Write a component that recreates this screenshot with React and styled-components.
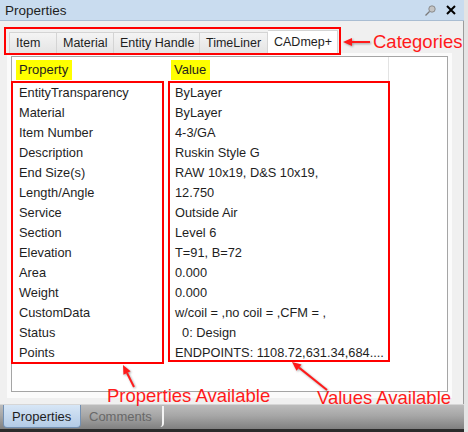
import React from 'react';
import styled, { createGlobalStyle } from 'styled-components';

const GlobalStyle = createGlobalStyle`
  html, body {
    margin: 0;
    padding: 0;
    background: #f0f0f0;
  }
`;

const Frame = styled.div`
  position: relative;
  width: 468px;
  height: 432px;
  display: flex;
  flex-direction: column;
  background: #f0f0f0;
  font-family: "Liberation Sans", Arial, sans-serif;
  color: #1e1e1e;
  overflow: hidden;
  box-sizing: border-box;
  border-right: 4px solid #e4e4e4;
  box-shadow: inset -1px 0 0 #9c9c9c;
`;

const TitleBar = styled.div`
  height: 20px;
  flex: none;
  display: flex;
  align-items: center;
  justify-content: space-between;
  padding: 0 8px 0 5px;
  background: #c9dcef;
  border-bottom: 1px solid #a9bdd2;
  font-size: 13.5px;
`;

const TitleIcons = styled.div`
  display: flex;
  align-items: center;
  gap: 9px;
`;

const TabRow = styled.div`
  flex: none;
  height: 23px;
  margin-top: 9px;
  padding-left: 9px;
  display: flex;
  align-items: flex-end;
`;

const Tab = styled.div`
  box-sizing: border-box;
  width: ${p => p.$w}px;
  height: ${p => (p.$active ? 23 : 21)}px;
  padding-left: 6px;
  display: flex;
  align-items: center;
  font-size: 12.5px;
  background: ${p => (p.$active ? '#ffffff' : 'linear-gradient(#f4f4f4, #e4e4e4)')};
  border: 1px solid #d4d4d4;
  border-bottom: none;
  border-left: ${p => (p.$first ? '1px solid #d4d4d4' : 'none')};
`;

const Page = styled.div`
  flex: none;
  height: 345px;
  box-sizing: border-box;
  margin: 0 12px 0 7px;
  padding: 3px 4px 6px 4px;
  background: #fbfbfb;
  display: flex;
`;

const ListView = styled.div`
  flex: 1;
  background: #ffffff;
  border: 1px solid #a5a5a5;
`;

const Grid = styled.div`
  display: grid;
  grid-template-columns: 156px 221px 1fr;
`;

const HeadCell = styled.div`
  height: 26px;
  display: flex;
  align-items: center;
  padding-left: ${p => p.$pad}px;
  border-right: ${p => (p.$divider ? '1px solid #e3e3e3' : 'none')};
  font-size: 13px;
`;

const Mark = styled.span`
  background: #ffff00;
  padding: 2px 4px 2px 3px;
  line-height: 16px;
`;

const Cell = styled.div`
  height: 20px;
  line-height: 20px;
  padding-left: ${p => p.$pad}px;
  font-size: 12.8px;
  white-space: nowrap;
`;

const Spacer = styled.div`
  height: 6px;
  flex: none;
`;

const BottomStrip = styled.div`
  flex: 1;
  display: flex;
  align-items: flex-start;
  background: linear-gradient(#bcbcbc, #a6a6a6 45%, #808080);
  border-top: 1px solid #d6d6d6;
  border-bottom: 3px solid #2b2b2b;
`;

const BottomTab = styled.div`
  box-sizing: border-box;
  height: ${p => (p.$active ? 23 : 21)}px;
  width: ${p => p.$w}px;
  margin-left: ${p => p.$ml}px;
  margin-top: ${p => (p.$active ? 0 : 1)}px;
  display: flex;
  align-items: center;
  padding-left: ${p => p.$pad}px;
  font-size: 13px;
  color: ${p => (p.$active ? '#1e1e1e' : '#686868')};
  background: ${p => (p.$active ? 'linear-gradient(#d7e6f6, #b3cbe6)' : 'transparent')};
  border: ${p => (p.$active ? '1px solid #7390b2' : 'none')};
  border-top: none;
  border-radius: 0 0 4px 4px;
  border-right: ${p => (p.$sep ? '2px solid #f4f4f4' : p.$active ? '1px solid #7390b2' : 'none')};
`;

const RedBox = styled.div`
  position: absolute;
  box-sizing: border-box;
  left: ${p => p.$x}px;
  top: ${p => p.$y}px;
  width: ${p => p.$w}px;
  height: ${p => p.$h}px;
  border: 2px solid #ff0000;
  pointer-events: none;
`;

const Note = styled.div`
  position: absolute;
  left: ${p => p.$x}px;
  top: ${p => p.$y}px;
  font-size: 18.5px;
  line-height: 22px;
  color: #ff1a1a;
  white-space: nowrap;
`;

const ArrowLayer = styled.svg`
  position: absolute;
  left: 0;
  top: 0;
  pointer-events: none;
`;

const tabs = [
  { label: 'Item', w: 48 },
  { label: 'Material', w: 57 },
  { label: 'Entity Handle', w: 86 },
  { label: 'TimeLiner', w: 68 },
  { label: 'CADmep+', w: 70, active: true },
];

const rows = [
  ['EntityTransparency', 'ByLayer'],
  ['Material', 'ByLayer'],
  ['Item Number', '4-3/GA'],
  ['Description', 'Ruskin Style G'],
  ['End Size(s)', 'RAW 10x19, D&S 10x19,'],
  ['Length/Angle', '12.750'],
  ['Service', 'Outside Air'],
  ['Section', 'Level 6'],
  ['Elevation', 'T=91, B=72'],
  ['Area', '0.000'],
  ['Weight', '0.000'],
  ['CustomData', 'w/coil = ,no coil = ,CFM = ,'],
  ['Status', '\u00a0 0: Design'],
  ['Points', 'ENDPOINTS: 1108.72,631.34,684....'],
];

const Pin = () => (
  <svg width="13" height="13" viewBox="0 0 13 13">
    <path d="M6 2 L10 6 L8.5 7 L6 4.5 Z" fill="#9a9a9a" />
    <circle cx="8" cy="5" r="3.2" fill="#c4c4c4" stroke="#7a7a7a" strokeWidth="0.8" />
    <path d="M5.5 7.5 L1.5 11.5" stroke="#7a7a7a" strokeWidth="1.2" />
  </svg>
);

const Close = () => (
  <svg width="10" height="10" viewBox="0 0 10 10">
    <path d="M1 1 L9 9 M9 1 L1 9" stroke="#000" strokeWidth="2" />
  </svg>
);

const Arrow = ({ x1, y1, x2, y2 }) => {
  const a = Math.atan2(y2 - y1, x2 - x1);
  const len = 9;
  const wid = 4;
  const bx = x2 - Math.cos(a) * len;
  const by = y2 - Math.sin(a) * len;
  const px = -Math.sin(a) * wid;
  const py = Math.cos(a) * wid;
  return (
    <g>
      <line x1={x1} y1={y1} x2={bx} y2={by} stroke="#ff1a1a" strokeWidth="2" />
      <polygon points={`${x2},${y2} ${bx + px},${by + py} ${bx - px},${by - py}`} fill="#ff1a1a" />
    </g>
  );
};

export default function App() {
  return (
    <>
      <GlobalStyle />
      <Frame>
        <TitleBar>
          <span>Properties</span>
          <TitleIcons>
            <Pin />
            <Close />
          </TitleIcons>
        </TitleBar>

        <TabRow>
          {tabs.map((t, i) => (
            <Tab key={t.label} $w={t.w} $active={t.active} $first={i === 0}>
              {t.label}
            </Tab>
          ))}
        </TabRow>

        <Page>
          <ListView>
            <Grid>
              <HeadCell $pad={4}><Mark>Property</Mark></HeadCell>
              <HeadCell $pad={3} $divider><Mark>Value</Mark></HeadCell>
              <HeadCell $pad={0} />
              {rows.map(([k, v]) => (
                <React.Fragment key={k}>
                  <Cell $pad={7}>{k}</Cell>
                  <Cell $pad={7}>{v}</Cell>
                  <Cell $pad={0} />
                </React.Fragment>
              ))}
            </Grid>
          </ListView>
        </Page>

        <Spacer />

        <BottomStrip>
          <BottomTab $active $w={78} $ml={3} $pad={8}>Properties</BottomTab>
          <BottomTab $w={83} $ml={0} $pad={8} $sep>Comments</BottomTab>
        </BottomStrip>

        <RedBox $x={4} $y={27} $w={337} $h={28} />
        <RedBox $x={11} $y={81} $w={153} $h={283} />
        <RedBox $x={168} $y={81} $w={222} $h={281} />

        <Note $x={373} $y={31}>Categories</Note>
        <Note $x={107} $y={385}>Properties Available</Note>
        <Note $x={317} $y={387}>Values Available</Note>

        <ArrowLayer width="468" height="432" viewBox="0 0 468 432">
          <g style={{ filter: 'drop-shadow(1px 1px 1px rgba(0,0,0,0.35))' }}>
            <Arrow x1={370} y1={42} x2={343} y2={42} />
            <Arrow x1={134} y1={387} x2={123} y2={365} />
            <Arrow x1={327} y1={390} x2={292} y2={362} />
          </g>
        </ArrowLayer>
      </Frame>
    </>
  );
}
